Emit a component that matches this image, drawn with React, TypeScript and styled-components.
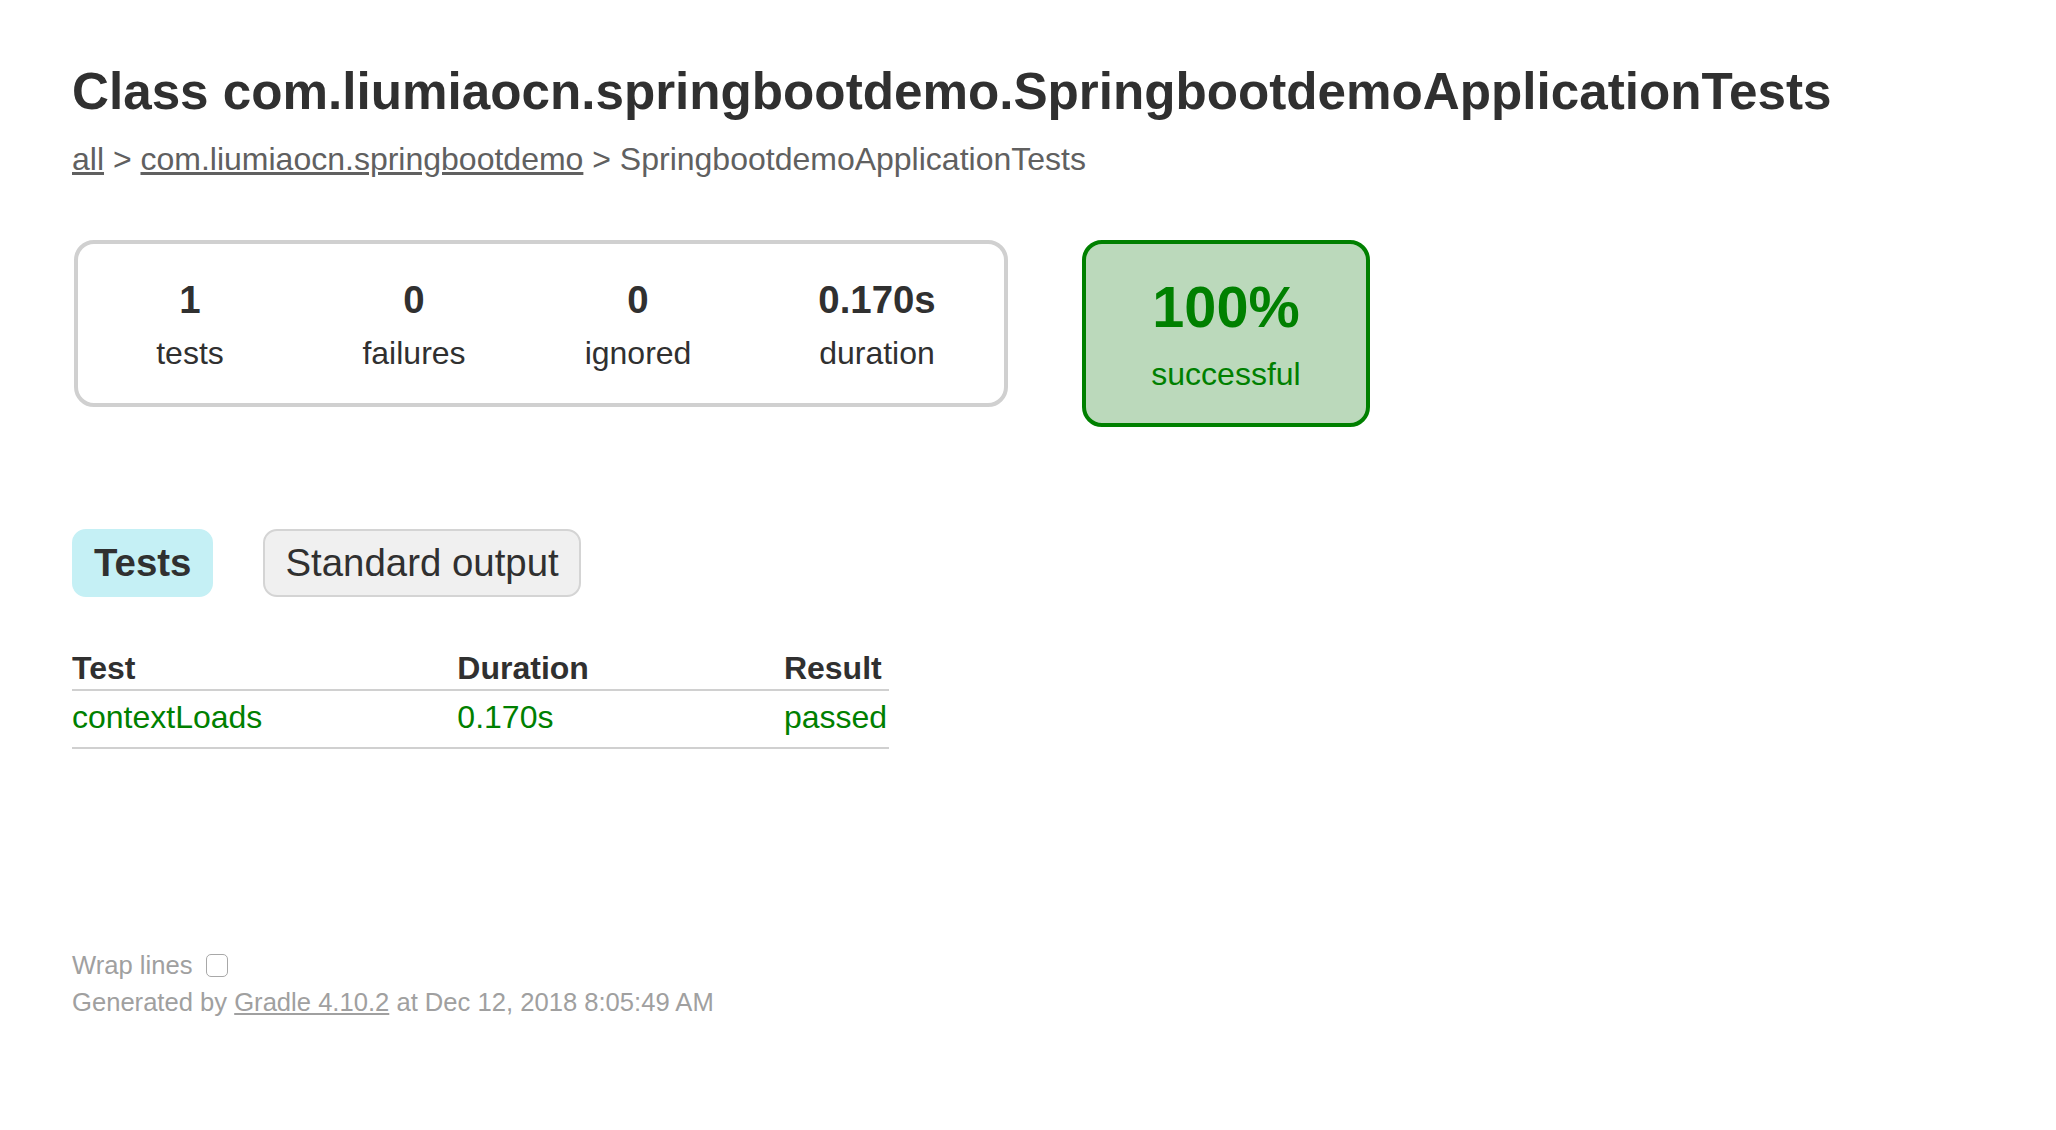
import React from "react";
import styled, { createGlobalStyle } from "styled-components";

const GlobalStyle = createGlobalStyle`
  html, body {
    margin: 0;
    padding: 0;
    background: #ffffff;
  }
  body {
    font-family: "Liberation Sans", Arial, Helvetica, sans-serif;
    font-size: 32px;
    color: #303030;
  }
`;

const Content = styled.div`
  padding: 62px 72px 60px 72px;
`;

const Title = styled.h1`
  margin: 0;
  font-size: 51.2px;
  line-height: 59px;
  font-weight: bold;
  white-space: nowrap;
  color: #303030;
`;

const Breadcrumbs = styled.div`
  margin-top: 20px;
  line-height: 37px;
  color: #606060;
  white-space: nowrap;
`;

const CrumbLink = styled.a`
  color: #606060;
  text-decoration: underline;
`;

const SummaryRow = styled.div`
  margin-top: 62px;
  padding-left: 2px;
  display: flex;
  align-items: flex-start;
`;

const SummaryGroup = styled.div`
  display: flex;
  padding-top: 4px;
  border: 4px solid #d0d0d0;
  border-radius: 20px;
`;

const InfoBox = styled.div<{ $w: number }>`
  width: ${(p) => p.$w}px;
  padding: 30px 0 31px 0;
  text-align: center;
`;

const Counter = styled.div`
  font-size: 38.4px;
  line-height: 44px;
  font-weight: bold;
  margin-bottom: 13px;
`;

const Label = styled.p`
  margin: 0;
  line-height: 37px;
`;

const SuccessBox = styled.div`
  margin-left: 74px;
  width: 280px;
  padding: 30px 0 30px 0;
  text-align: center;
  border: 4px solid #008000;
  border-radius: 20px;
  background: #bbd9bb;
  color: #008000;
`;

const Percent = styled.div`
  font-size: 57.6px;
  line-height: 66px;
  font-weight: bold;
  margin-bottom: 16px;
`;

const TabList = styled.ul`
  margin: 102px 0 0 0;
  padding: 0;
  list-style: none;
  display: flex;
  gap: 50px;
`;

const Tab = styled.li<{ $selected?: boolean }>`
  padding: 10px 20px;
  border: 2px solid ${(p) => (p.$selected ? "#c5f0f5" : "#d4d4d4")};
  background: ${(p) => (p.$selected ? "#c5f0f5" : "#f0f0f0")};
  border-radius: 14px;
  font-size: 38.4px;
  line-height: 44px;
  font-weight: ${(p) => (p.$selected ? "bold" : "normal")};
  color: #303030;
  white-space: nowrap;
`;

const Table = styled.table`
  margin-top: 51px;
  border-collapse: collapse;
  border-bottom: 2px solid #d0d0d0;
`;

const Th = styled.th<{ $first?: boolean }>`
  text-align: left;
  white-space: nowrap;
  font-weight: bold;
  line-height: 37px;
  padding: 2px 2px 2px ${(p) => (p.$first ? 0 : 193)}px;
  border-bottom: 2px solid #d0d0d0;
`;

const Td = styled.td<{ $first?: boolean }>`
  white-space: nowrap;
  line-height: 37px;
  padding: 8px 2px 11px ${(p) => (p.$first ? 0 : 193)}px;
  color: #008000;
`;

const Footer = styled.div`
  margin-top: 198px;
  font-size: 25.6px;
  color: #a0a0a0;
  white-space: nowrap;
`;

const WrapRow = styled.label`
  display: flex;
  align-items: center;
  box-sizing: border-box;
  height: 41px;
  padding-bottom: 5px;
  line-height: 36px;
`;

const Checkbox = styled.input`
  appearance: none;
  -webkit-appearance: none;
  margin: 0 0 0 14px;
  width: 22px;
  height: 23px;
  border: 1.5px solid #a8a8a8;
  border-radius: 5px;
  background: #ffffff;
  box-sizing: border-box;
`;

const GeneratedLine = styled.div`
  line-height: 29.4px;
`;

const FooterLink = styled.a`
  color: #a0a0a0;
  text-decoration: underline;
`;

const stats = [
  { value: "1", label: "tests", w: 224 },
  { value: "0", label: "failures", w: 224 },
  { value: "0", label: "ignored", w: 224 },
  { value: "0.170s", label: "duration", w: 254 },
];

export default function App() {
  return (
    <>
      <GlobalStyle />
      <Content>
        <Title>Class com.liumiaocn.springbootdemo.SpringbootdemoApplicationTests</Title>
        <Breadcrumbs>
          <CrumbLink href="#">all</CrumbLink> &gt;{" "}
          <CrumbLink href="#">com.liumiaocn.springbootdemo</CrumbLink> &gt; SpringbootdemoApplicationTests
        </Breadcrumbs>
        <SummaryRow>
          <SummaryGroup>
            {stats.map((s) => (
              <InfoBox key={s.label} $w={s.w}>
                <Counter>{s.value}</Counter>
                <Label>{s.label}</Label>
              </InfoBox>
            ))}
          </SummaryGroup>
          <SuccessBox>
            <Percent>100%</Percent>
            <Label>successful</Label>
          </SuccessBox>
        </SummaryRow>
        <TabList>
          <Tab $selected>Tests</Tab>
          <Tab>Standard output</Tab>
        </TabList>
        <Table>
          <thead>
            <tr>
              <Th $first>Test</Th>
              <Th>Duration</Th>
              <Th>Result</Th>
            </tr>
          </thead>
          <tbody>
            <tr>
              <Td $first>contextLoads</Td>
              <Td>0.170s</Td>
              <Td>passed</Td>
            </tr>
          </tbody>
        </Table>
        <Footer>
          <WrapRow>
            Wrap lines
            <Checkbox type="checkbox" autoComplete="off" />
          </WrapRow>
          <GeneratedLine>
            Generated by <FooterLink href="#">Gradle 4.10.2</FooterLink> at Dec 12, 2018 8:05:49 AM
          </GeneratedLine>
        </Footer>
      </Content>
    </>
  );
}
